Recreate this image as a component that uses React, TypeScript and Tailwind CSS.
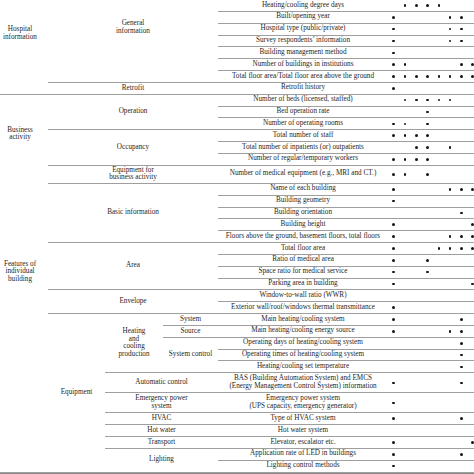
import React from "react"

type Row = { text: string[]; dots: number[]; h?: string }

type Group = {
    label: string[]
    cell: string
    bare?: boolean
    groups?: Group[]
    rows?: Row[]
}

const cols = [1, 2, 3, 4, 5, 6, 7, 8]

const r = (text: string, dots: number[], h?: string): Row => ({ text: [text], dots, h })

const table: Group[] = [
    {
        label: ["Hospital", "information"],
        cell: "w-[48px] pr-[8px] justify-start pt-[26px]",
        groups: [
            {
                label: ["General", "information"],
                cell: "w-[170px] justify-start pt-[20px]",
                rows: [
                    r("Heating/cooling degree days", [2, 3, 4, 5]),
                    r("Built/opening year", [1, 6, 7]),
                    r("Hospital type (public/private)", [1, 6, 7]),
                    r("Survey respondents\u2019 information", [1, 6, 7]),
                    r("Building management method", [1]),
                    r("Number of buildings in institutions", [1, 2, 7, 8]),
                    r("Total floor area/Total floor area above the ground", [1, 2, 3, 4, 5, 6, 7, 8]),
                ],
            },
            {
                label: ["Retrofit"],
                cell: "w-[170px] justify-center",
                rows: [r("Retrofit history", [1])],
            },
        ],
    },
    {
        label: ["Business", "activity"],
        cell: "w-[48px] pr-[8px] justify-start pt-[32px]",
        bare: true,
        groups: [
            {
                label: ["Operation"],
                cell: "w-[170px] justify-center",
                rows: [
                    r("Number of beds (licensed, staffed)", [2, 3, 4, 5, 6]),
                    r("Bed operation rate", [4]),
                    r("Number of operating rooms", [1, 2, 4]),
                ],
            },
            {
                label: ["Occupancy"],
                cell: "w-[170px] justify-center",
                rows: [
                    r("Total number of staff", [1, 2, 3, 4]),
                    r("Total number of inpatients (or) outpatients", [3, 4, 6]),
                    r("Number of regular/temporary workers", [1, 2, 3, 4]),
                ],
            },
            {
                label: ["Equipment for", "business activity"],
                cell: "w-[170px] justify-center",
                rows: [r("Number of medical equipment (e.g., MRI and CT.)", [1, 2, 4], "h-[18px]")],
            },
        ],
    },
    {
        label: ["Features of", "individual", "building"],
        cell: "w-[48px] pr-[8px] justify-start pt-[77px]",
        groups: [
            {
                label: ["Basic information"],
                cell: "w-[170px] justify-center",
                rows: [
                    r("Name of each building", [1, 6, 7, 8]),
                    r("Building geometry", [1]),
                    r("Building orientation", [7]),
                    r("Building height", [1, 8]),
                    r("Floors above the ground, basement floors, total floors", [1, 6, 7, 8]),
                ],
            },
            {
                label: ["Area"],
                cell: "w-[170px] justify-center",
                rows: [
                    r("Total floor area", [1, 5, 6, 7, 8]),
                    r("Ratio of medical area", [1, 4]),
                    r("Space ratio for medical service", [1, 4]),
                    r("Parking area in building", [1, 8]),
                ],
            },
            {
                label: ["Envelope"],
                cell: "w-[170px] justify-center",
                rows: [
                    r("Window-to-wall ratio (WWR)", []),
                    r("Exterior wall/roof/windows thermal transmittance", [1]),
                ],
            },
            {
                label: ["Equipment"],
                cell: "w-[57px] justify-center",
                groups: [
                    {
                        label: ["Heating", "and", "cooling", "production"],
                        cell: "w-[58px] justify-center",
                        groups: [
                            {
                                label: ["System"],
                                cell: "w-[55px] justify-center",
                                rows: [r("Main heating/cooling system", [1, 7])],
                            },
                            {
                                label: ["Source"],
                                cell: "w-[55px] justify-center",
                                rows: [r("Main heating/cooling energy source", [1, 6, 7])],
                            },
                            {
                                label: ["System control"],
                                cell: "w-[55px] justify-center",
                                rows: [
                                    r("Operating days of heating/cooling system", [7]),
                                    r("Operating times of heating/cooling system", [7]),
                                    r("Heating/cooling set temperature", [7]),
                                ],
                            },
                        ],
                    },
                    {
                        label: ["Automatic control"],
                        cell: "w-[113px] justify-center",
                        rows: [
                            {
                                text: [
                                    "BAS (Building Automation System) and EMCS",
                                    "(Energy Management Control System) information",
                                ],
                                dots: [1, 7],
                                h: "h-[20px]",
                            },
                        ],
                    },
                    {
                        label: ["Emergency power", "system"],
                        cell: "w-[113px] justify-center",
                        rows: [
                            {
                                text: ["Emergency power system", "(UPS capacity, emergency generator)"],
                                dots: [1],
                                h: "h-[20px]",
                            },
                        ],
                    },
                    {
                        label: ["HVAC"],
                        cell: "w-[113px] justify-center",
                        rows: [r("Type of HVAC system", [1, 7])],
                    },
                    {
                        label: ["Hot water"],
                        cell: "w-[113px] justify-center",
                        rows: [r("Hot water system", [])],
                    },
                    {
                        label: ["Transport"],
                        cell: "w-[113px] justify-center",
                        rows: [r("Elevator, escalator etc.", [1, 8])],
                    },
                    {
                        label: ["Lighting"],
                        cell: "w-[113px] justify-center",
                        rows: [
                            r("Application rate of LED in buildings", [1, 7]),
                            r("Lighting control methods", [1]),
                        ],
                    },
                ],
            },
        ],
    },
]

function Lines({ text }: { text: string[] }) {
    return (
        <>
            {text.map((t) => (
                <span key={t} className="block whitespace-nowrap">{t}</span>
            ))}
        </>
    )
}

function TableRow({ row }: { row: Row }) {
    return (
        <div className={`flex border-b border-[#9f9f9f] ${row.h ?? "h-[11.85px]"}`}>
            <div className="w-[170px] shrink-0 flex flex-col items-center justify-center text-center leading-[7.8px]">
                <Lines text={row.text} />
            </div>
            {cols.map((c) => (
                <div key={c} className="w-[11.3px] shrink-0 flex items-center justify-center">
                    {row.dots.includes(c) && <span className="block w-[2.6px] h-[2.6px] rounded-full bg-[#151515]" />}
                </div>
            ))}
        </div>
    )
}

function TableGroup({ group }: { group: Group }) {
    return (
        <div className="flex">
            <div
                className={`${group.cell} shrink-0 flex flex-col items-center text-center leading-[7.6px] ${
                    group.bare ? "" : "border-b border-[#9f9f9f]"
                }`}
            >
                <Lines text={group.label} />
            </div>
            <div className="flex flex-col">
                {group.groups?.map((g) => <TableGroup key={g.label.join(" ")} group={g} />)}
                {group.rows?.map((row) => <TableRow key={row.text.join(" ")} row={row} />)}
            </div>
        </div>
    )
}

export default function App() {
    return (
        <div className="w-[474px] h-[474px] overflow-hidden bg-white text-[#262626] text-[7.2px] font-['Liberation_Serif',serif]">
            <div className="flex flex-col border-b border-[#888888]">
                {table.map((g) => (
                    <TableGroup key={g.label.join(" ")} group={g} />
                ))}
            </div>
        </div>
    )
}
